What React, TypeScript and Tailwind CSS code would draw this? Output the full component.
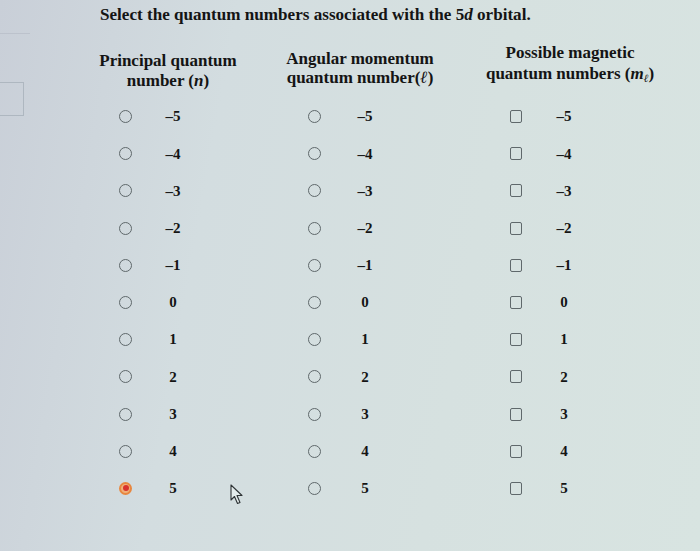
import React from 'react';

const values = ['–5', '–4', '–3', '–2', '–1', '0', '1', '2', '3', '4', '5'];

function Radio({ checked }: { checked?: boolean }) {
  if (checked) {
    return (
      <span className="flex h-[13px] w-[13px] items-center justify-center rounded-full border-2 border-[#e8873f] bg-[#f0b07a]">
        <span className="h-[6px] w-[6px] rounded-full bg-[#d8322c]" />
      </span>
    );
  }
  return <span className="block h-[13px] w-[13px] rounded-full border border-[#5f686b]" />;
}

function Box() {
  return <span className="block h-[13px] w-[12px] rounded-[2px] border border-[#5f686b]" />;
}

function Cursor() {
  return (
    <svg width="16" height="22" viewBox="0 0 16 22" className="block">
      <path
        d="M1 1 L1 16 L4.5 12.5 L7.5 19.5 L10 18.5 L7 11.5 L12 11.5 Z"
        fill="#e4ecec"
        stroke="#2f3436"
        strokeWidth="1.1"
        strokeLinejoin="round"
      />
    </svg>
  );
}

export default function App() {
  return (
    <div className="relative h-[551px] w-[700px] overflow-hidden bg-[linear-gradient(100deg,#c9cfd8_0%,#d3dde0_30%,#d6e1e0_65%,#d8e4e1_100%)] font-['Liberation_Serif',serif] text-[#141414]">
      {/* faint panel edge at the left of the photo */}
      <div className="absolute left-0 top-[82px] h-[34px] w-[24px] border border-l-0 border-[#aeb7c0]" />
      <div className="absolute left-0 top-0 h-[34px] w-[30px] border-b border-[#bcc2cc]" />

      <div className="pl-[100px] pt-[4px]">
        <p className="text-[17.1px] font-bold leading-[22px]">
          Select the quantum numbers associated with the 5<i>d</i> orbital.
        </p>
      </div>

      {/* headers */}
      <div className="mt-[18px] flex text-[17px] font-bold leading-[20px]">
        <div className="ml-[88px] mt-[7px] w-[160px] text-center">
          Principal quantum
          <br />
          number (<i>n</i>)
        </div>
        <div className="ml-[32px] mt-[5px] w-[160px] text-center leading-[19px]">
          Angular momentum
          <br />
          quantum number(<i>ℓ</i>)
        </div>
        <div className="ml-[30px] mt-[-2px] w-[200px] text-center leading-[21px]">
          Possible magnetic
          <br />
          quantum numbers (<i>m</i>
          <sub className="text-[11px]">
            <i>ℓ</i>
          </sub>
          )
        </div>
      </div>

      {/* rows */}
      <div className="mt-[7px] flex flex-col text-[15px] font-bold">
        {values.map((v, i) => (
          <div key={v} className="flex h-[37.2px] items-center">
            <div className="ml-[119px] flex w-[13px] justify-center">
              <Radio checked={i === values.length - 1} />
            </div>
            <span className="ml-[18px] w-[46px] text-center">{v}</span>
            {i === values.length - 1 ? (
              <div className="ml-[34px] mt-[14px] w-[16px]">
                <Cursor />
              </div>
            ) : (
              <div className="ml-[34px] w-[16px]" />
            )}
            <div className="ml-[62px] flex w-[13px] justify-center">
              <Radio />
            </div>
            <span className="ml-[21px] w-[46px] text-center">{v}</span>
            <div className="ml-[121px] flex w-[13px] justify-center">
              <Box />
            </div>
            <span className="ml-[19px] w-[46px] text-center">{v}</span>
          </div>
        ))}
      </div>
    </div>
  );
}
